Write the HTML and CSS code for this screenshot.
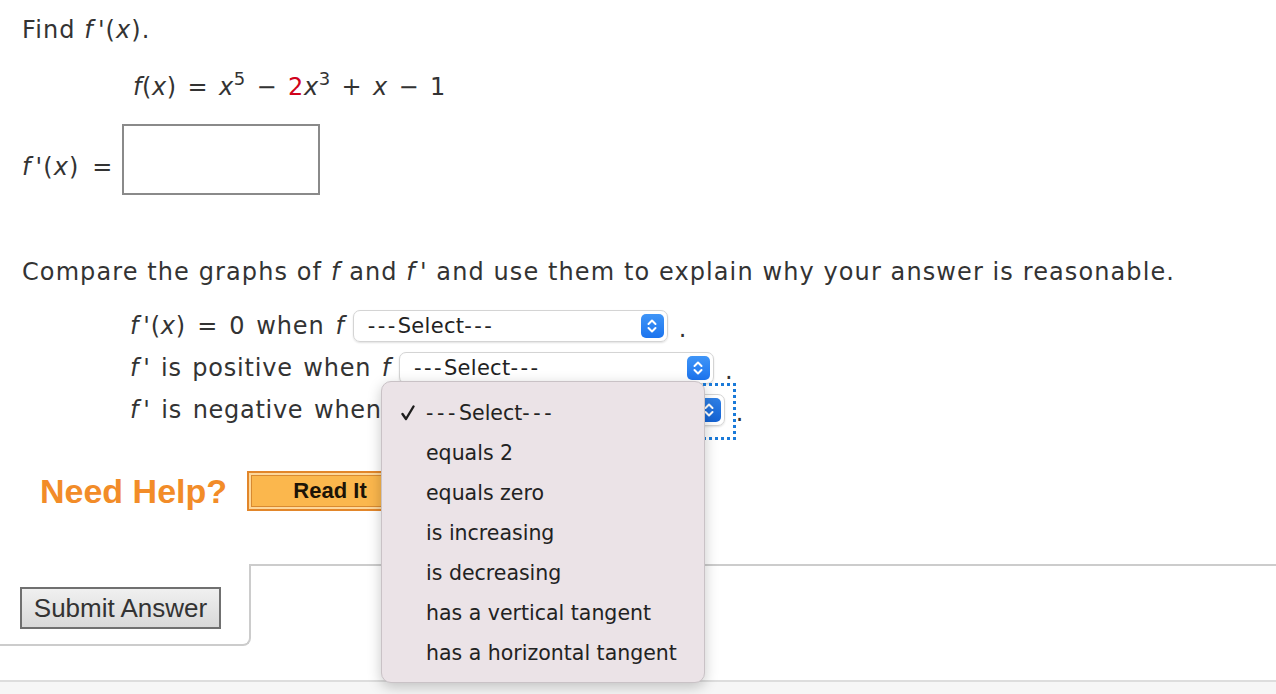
FILE: index.html
```html
<!DOCTYPE html>
<html lang="en">
<head>
    <meta charset="UTF-8">
    <meta name="viewport" content="width=device-width, initial-scale=1.0">
    <title>Find f'(x)</title>
    <link rel="stylesheet" href="styles.css">
</head>
<body>
    <div class="question">
        <div class="find">Find <i>f</i><i class="prime">'</i>(<i>x</i>).</div>
        <div class="formula">
            <i>f</i>(<i>x</i>) = <i>x</i><sup>5</sup> &minus; <span class="red">2</span><i>x</i><sup>3</sup> + <i>x</i> &minus; 1
        </div>
        <div class="answer">
            <span class="label"><i>f</i><i class="prime">'</i>(<i>x</i>) =</span>
            <div class="answer-box"></div>
        </div>
        <div class="compare">Compare the graphs of <i>f</i> and <i>f</i><i class="prime">'</i> and use them to explain why your answer is reasonable.</div>
        <div class="rows">
            <div class="row">
                <span><i>f</i><i class="prime">'</i>(<i>x</i>) = 0 when <i>f</i></span>
                <div class="select"><span><span class="dash">---</span>Select<span class="dash">---</span></span><span class="arrows"><svg width="12" height="16" viewBox="0 0 12 16"><path d="M2.5 6 L6 2.5 L9.5 6 M2.5 10 L6 13.5 L9.5 10" fill="none" stroke="#fff" stroke-width="2" stroke-linecap="round" stroke-linejoin="round"/></svg></span></div>
                <span class="dot">.</span>
            </div>
            <div class="row">
                <span><i>f</i><i class="prime">'</i> is positive when <i>f</i></span>
                <div class="select"><span><span class="dash">---</span>Select<span class="dash">---</span></span><span class="arrows"><svg width="12" height="16" viewBox="0 0 12 16"><path d="M2.5 6 L6 2.5 L9.5 6 M2.5 10 L6 13.5 L9.5 10" fill="none" stroke="#fff" stroke-width="2" stroke-linecap="round" stroke-linejoin="round"/></svg></span></div>
                <span class="dot">.</span>
            </div>
            <div class="row">
                <span><i>f</i><i class="prime">'</i> is negative when <i>f</i></span>
                <div class="select"><span><span class="dash">---</span>Select<span class="dash">---</span></span><span class="arrows focused"><svg width="12" height="16" viewBox="0 0 12 16"><path d="M2.5 6 L6 2.5 L9.5 6 M2.5 10 L6 13.5 L9.5 10" fill="none" stroke="#fff" stroke-width="2" stroke-linecap="round" stroke-linejoin="round"/></svg></span></div>
                <span class="dot">.</span>
            </div>
        </div>
        <div class="help">
            <span class="need-help">Need Help?</span>
            <span class="read-it">Read It</span>
        </div>
    </div>

    <div class="footer">
        <div class="submit-cell">
            <button class="submit">Submit Answer</button>
        </div>
        <div class="rest"></div>
    </div>
    <div class="strip"></div>

    <div class="focus-ring"></div>
    <ul class="popup">
        <li class="checked"><svg class="check" width="14" height="16" viewBox="0 0 14 16"><path d="M1.5 9 L5 14 L12.5 1.5" fill="none" stroke="#1e1e1e" stroke-width="2.4" stroke-linecap="round" stroke-linejoin="round"/></svg><span class="dash">---</span>Select<span class="dash">---</span></li>
        <li>equals 2</li>
        <li>equals zero</li>
        <li>is increasing</li>
        <li>is decreasing</li>
        <li>has a vertical tangent</li>
        <li>has a horizontal tangent</li>
    </ul>
</body>
</html>
```

FILE: styles.css
```css
body {
    margin: 0;
    font-family: 'DejaVu Sans', Verdana, sans-serif;
    color: #333;
    background: #fff;
    overflow: hidden;
}

.question {
    padding-left: 22px;
    font-size: 24px;
    letter-spacing: 1.1px;
}

.prime {
    margin-left: 4px;
}

.find {
    margin-top: 12px;
    line-height: 36px;
}

.formula {
    margin-top: 21px;
    line-height: 36px;
    padding-left: 111px;
    word-spacing: 2.5px;
    letter-spacing: 0.6px;
}

.formula sup {
    font-size: 18px;
    vertical-align: 10px;
    line-height: 0;
}

.red {
    color: #d0021b;
}

.answer {
    margin-top: 19px;
    display: flex;
    align-items: center;
}

.answer .label {
    padding-top: 15px;
    line-height: 36px;
    word-spacing: 4px;
}

.answer-box {
    margin-left: 9px;
    width: 194px;
    height: 67px;
    border: 2px solid #8a8a8a;
}

.compare {
    margin-top: 59px;
    line-height: 36px;
}

.rows {
    margin-top: 15px;
    padding-left: 108px;
}

.row {
    display: flex;
    align-items: center;
    height: 42px;
    letter-spacing: 0.8px;
    word-spacing: 2px;
}

.row:first-child {
    word-spacing: 2.7px;
}

.row:last-child {
    letter-spacing: 0.7px;
    word-spacing: 2.5px;
}

.select {
    margin-left: 8px;
    width: 296px;
    height: 30px;
    border: 1px solid #d4d4d4;
    border-radius: 7px;
    box-shadow: 0 1px 2px rgba(0, 0, 0, 0.12);
    display: flex;
    align-items: center;
    justify-content: space-between;
    padding: 0 3px 0 14px;
    font-size: 21px;
    letter-spacing: 0.3px;
    word-spacing: 0;
    color: #222;
}

.dash {
    letter-spacing: 2.4px;
}

.arrows {
    width: 23px;
    height: 24px;
    border-radius: 5px;
    background: linear-gradient(#3f95f7, #1c74ee);
    display: flex;
    align-items: center;
    justify-content: center;
}

.arrows.focused {
    background: linear-gradient(#2f80e6, #1463d4);
}

.dot {
    margin-left: 11px;
    padding-top: 6px;
}

.help {
    margin-top: 40px;
    padding-left: 18px;
    display: flex;
    align-items: center;
    height: 40px;
    letter-spacing: 0;
}

.need-help {
    font-family: 'Liberation Sans', Arial, sans-serif;
    font-weight: bold;
    font-size: 34px;
    color: #f28c28;
}

.read-it {
    margin-left: 20px;
    width: 162px;
    height: 36px;
    border: 2px solid #e2862a;
    background: #fbb74d;
    box-shadow: inset 0 0 0 2px #fdd79a, inset 0 0 0 3px #d88a30;
    font-family: 'Liberation Sans', Arial, sans-serif;
    font-weight: bold;
    font-size: 22px;
    color: #1c1407;
    display: flex;
    align-items: center;
    justify-content: center;
}

.footer {
    margin-top: 53px;
    display: flex;
}

.submit-cell {
    width: 251px;
    height: 82px;
    border-right: 2px solid #cccccc;
    border-bottom: 2px solid #cccccc;
    border-bottom-right-radius: 8px;
    padding-top: 23px;
    padding-left: 20px;
    box-sizing: border-box;
}

.rest {
    flex: 1;
    border-top: 2px solid #cccccc;
}

.submit {
    width: 201px;
    height: 42px;
    border: 2px solid #707070;
    background: linear-gradient(#f0f0f0, #d9d9d9);
    font-family: 'Liberation Sans', Arial, sans-serif;
    font-size: 26px;
    color: #333;
    padding: 0;
}

.strip {
    margin-top: 34px;
    height: 20px;
    border-top: 2px solid #dddddd;
    background: #f6f6f6;
}

.focus-ring {
    position: absolute;
    left: 690px;
    top: 383px;
    width: 40px;
    height: 51px;
    border: 3px dotted #1a7ad9;
}

.popup {
    position: absolute;
    left: 381px;
    top: 381px;
    width: 322px;
    height: 289px;
    margin: 0;
    padding: 11px 0 0 0;
    list-style: none;
    background: #ebe3e7;
    border: 1px solid #c9c2c6;
    border-radius: 10px;
    box-shadow: 0 4px 14px rgba(0, 0, 0, 0.22);
    font-size: 20.5px;
    color: #222;
}

.popup li {
    position: relative;
    height: 40px;
    line-height: 40px;
    padding-left: 44px;
}

.popup .dash {
    letter-spacing: 3.6px;
}

.popup .check {
    position: absolute;
    left: 19px;
    top: 12px;
}
```
